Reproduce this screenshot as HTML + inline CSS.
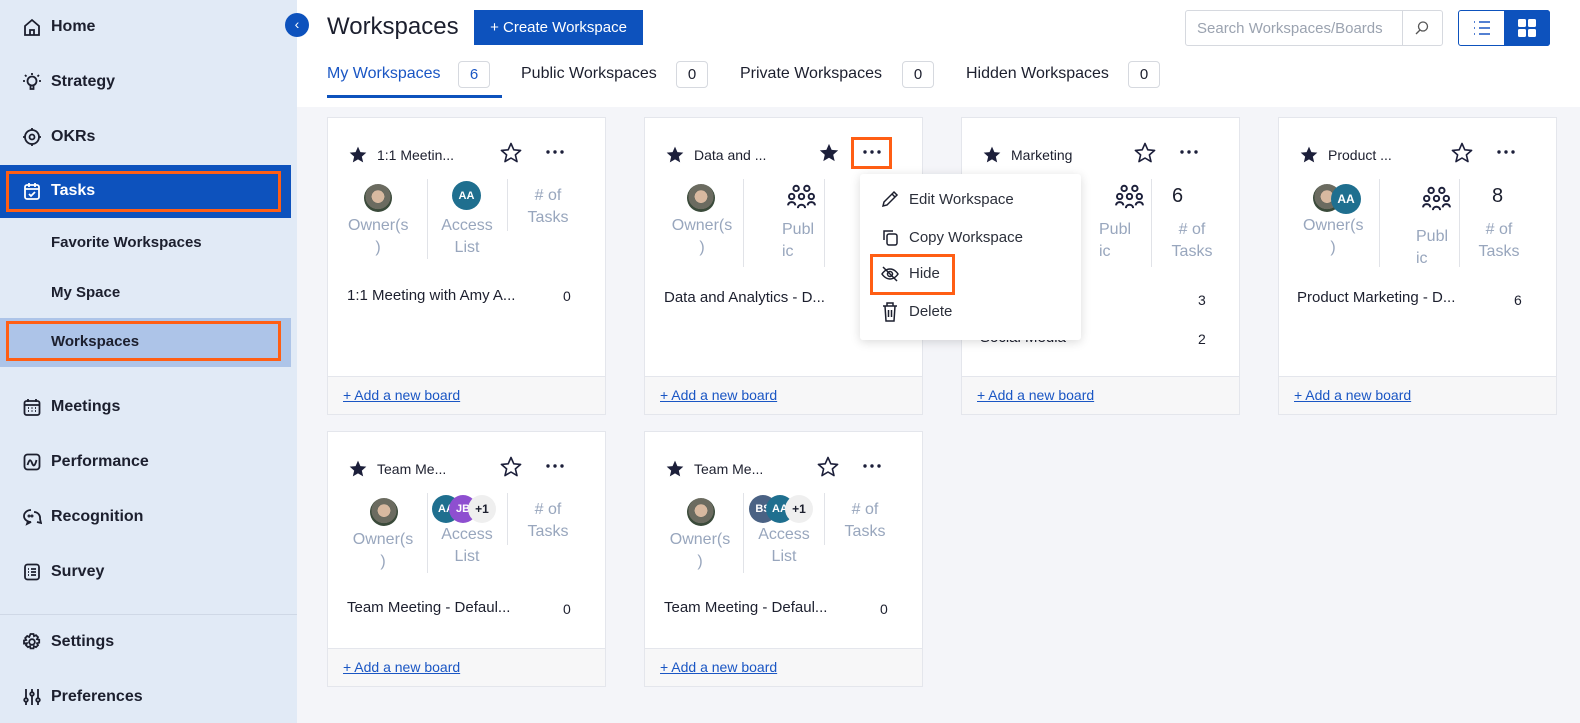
<!DOCTYPE html>
<html><head><meta charset="utf-8"><style>
*{box-sizing:border-box;margin:0;padding:0}
body{width:1580px;height:723px;overflow:hidden;font-family:"Liberation Sans",sans-serif;background:#f4f5f9;position:relative;color:#1c1f2e}
.a{position:absolute}
#side{left:0;top:0;width:297px;height:723px;background:#e1eaf6}
.ni{position:absolute;left:22px;font-size:16px;font-weight:bold;color:#1c1f2e;display:flex;align-items:center;gap:9px}
.ni svg{width:20px;height:20px;fill:none;stroke:#1c1f2e;stroke-width:1.8}
.sub{position:absolute;left:51px;font-size:15px;font-weight:bold;color:#1c1f2e}
.card{position:absolute;width:279px;background:#fff;border:1px solid #e4e6ec}
.foot{position:absolute;left:0;right:0;bottom:0;height:38px;background:#f7f7f8;border-top:1px solid #e4e6ec}
.foot span{position:absolute;left:15px;top:10px;font-size:14px;color:#1a56c4;text-decoration:underline}
.t{font-size:14px;color:#1c1f2e}
.g{color:#98a6bd;font-size:16px;line-height:22px;text-align:center}
.dv{position:absolute;width:1px;background:#e1e3e8}
.av{position:absolute;width:28px;height:28px;border-radius:50%;color:#fff;font-size:11px;font-weight:bold;display:flex;align-items:center;justify-content:center}
.ph{background:radial-gradient(circle at 50% 45%,#d8b9a0 0 30%,#6b6b60 31% 60%,#3a4a3a 61%)}
.tab{position:absolute;top:65px;font-size:16px;color:#1c1f2e}
.bd{position:absolute;top:61px;width:32px;height:27px;border:1px solid #d6d9df;border-radius:4px;font-size:15px;text-align:center;line-height:25px;background:#fff}
.dots{position:absolute;width:18px;height:4px}
</style></head><body>
<div id="side" class="a">
<div class="ni" style="top:17px"><svg viewBox="0 0 20 20"><path d="M3 9l7-6 7 6v9H3z M8 18v-5h4v5"/></svg>Home</div>
<div class="ni" style="top:72px"><svg viewBox="0 0 20 20"><circle cx="10" cy="9" r="4.5"/><path d="M8.5 14v3h3v-3M10 1v2M3 3l1.5 1.5M17 3l-1.5 1.5M1 9h2M17 9h2"/></svg>Strategy</div>
<div class="ni" style="top:127px"><svg viewBox="0 0 20 20"><circle cx="10" cy="10" r="7"/><circle cx="10" cy="10" r="2.5"/><path d="M10 1v2M10 17v2M1 10h2M17 10h2"/></svg>OKRs</div>
<div class="a" style="left:0;top:165px;width:291px;height:53px;background:#0d52bd"></div>
<div class="a" style="left:6px;top:171px;width:275px;height:41px;border:3px solid #ff5e14"></div>
<div class="ni" style="top:181px;color:#fff"><svg viewBox="0 0 20 20" style="stroke:#fff"><rect x="3" y="4" width="14" height="14" rx="2"/><path d="M3 8h14M7 2v4M13 2v4M7 13l2 2 4-4"/></svg>Tasks</div>
<div class="sub" style="top:234px">Favorite Workspaces</div>
<div class="sub" style="top:284px">My Space</div>
<div class="a" style="left:0;top:318px;width:291px;height:49px;background:#adc4e8"></div>
<div class="a" style="left:6px;top:321px;width:275px;height:40px;border:3px solid #ff5e14"></div>
<div class="sub" style="top:333px">Workspaces</div>
<div class="ni" style="top:397px"><svg viewBox="0 0 20 20"><rect x="2.5" y="4" width="15" height="14" rx="2"/><path d="M2.5 8h15M6 2v3M14 2v3M6 11h1M9.5 11h1M13 11h1M6 14h1M9.5 14h1M13 14h1"/></svg>Meetings</div>
<div class="ni" style="top:452px"><svg viewBox="0 0 20 20"><rect x="2.5" y="2.5" width="15" height="15" rx="3"/><path d="M5.5 13c2-6 3-6 4.5-2s3 3 4.5-3"/></svg>Performance</div>
<div class="ni" style="top:507px"><svg viewBox="0 0 20 20"><path d="M9 3a7 6 0 1 0 0 12l-4 2 1-3M12 5a6 6 0 0 1 6 7l1 4-4-1"/><circle cx="7" cy="9" r=".6"/><circle cx="10" cy="9" r=".6"/></svg>Recognition</div>
<div class="ni" style="top:562px"><svg viewBox="0 0 20 20"><rect x="3" y="2.5" width="14" height="15" rx="2.5"/><path d="M6 7h1M9 7h5M6 10h1M9 10h5M6 13h1M9 13h5"/></svg>Survey</div>
<div class="a" style="left:0;top:614px;width:297px;height:1px;background:#cfd8e6"></div>
<div class="ni" style="top:632px"><svg viewBox="0 0 20 20"><circle cx="10" cy="10" r="2.8"/><path d="M8.5 2h3l.5 2.2 2-1 2 2-1 2 2.2.5v3l-2.2.5 1 2-2 2-2-1-.5 2.2h-3l-.5-2.2-2 1-2-2 1-2L2 11.5v-3l2.2-.5-1-2 2-2 2 1z"/></svg>Settings</div>
<div class="ni" style="top:687px"><svg viewBox="0 0 20 20"><path d="M4 2v9M4 15v3M10 2v3M10 9v9M16 2v9M16 15v3"/><circle cx="4" cy="13" r="1.8"/><circle cx="10" cy="7" r="1.8"/><circle cx="16" cy="13" r="1.8"/></svg>Preferences</div>
</div>
<div class="a" style="left:297px;top:0;width:1283px;height:107px;background:#fff"></div>
<div class="a" style="left:285px;top:13px;width:24px;height:24px;border-radius:50%;background:#0d52bd;color:#fff;font-size:14px;text-align:center;line-height:23px">&#8249;</div>
<div class="a" style="left:327px;top:13px;font-size:24px;color:#1c1f2e">Workspaces</div>
<div class="a" style="left:474px;top:10px;width:169px;height:35px;background:#0d52bd;color:#fff;font-size:15px;line-height:35px;text-align:center">+ Create Workspace</div>
<div class="tab" style="left:327px;color:#1a56c4">My Workspaces</div><div class="bd" style="left:458px;color:#1a56c4">6</div>
<div class="a" style="left:327px;top:95px;width:175px;height:3px;background:#0d52bd"></div>
<div class="tab" style="left:521px">Public Workspaces</div><div class="bd" style="left:676px">0</div>
<div class="tab" style="left:740px">Private Workspaces</div><div class="bd" style="left:902px">0</div>
<div class="tab" style="left:966px">Hidden Workspaces</div><div class="bd" style="left:1128px">0</div>
<div class="a" style="left:1185px;top:10px;width:258px;height:36px;border:1px solid #d6d9df;border-radius:3px;background:#fff"><span class="a" style="left:11px;top:9px;font-size:15px;color:#9ba3b0;white-space:nowrap;width:195px;overflow:hidden">Search Workspaces/Boards</span><div class="a" style="left:216px;top:0;width:1px;height:34px;background:#d6d9df"></div><svg class="a" style="left:228px;top:9px" width="16" height="16" viewBox="0 0 16 16" fill="none" stroke="#555" stroke-width="1.3"><circle cx="9" cy="6.5" r="4.5"/><path d="M6 10l-4 4"/></svg></div>
<div class="a" style="left:1458px;top:10px;width:92px;height:36px;border:1px solid #0d52bd;border-radius:3px;background:#fff"></div>
<svg class="a" style="left:1471px;top:17px" width="22" height="22" viewBox="0 0 22 22" fill="none" stroke="#1a56c4" stroke-width="1.6"><path d="M8 5h11M8 11h11M8 17h11M3 5h1M3 11h1M3 17h1"/></svg>
<div class="a" style="left:1504px;top:10px;width:46px;height:36px;background:#0d52bd;border-radius:0 3px 3px 0"></div>
<svg class="a" style="left:1517px;top:18px" width="20" height="20" viewBox="0 0 20 20" fill="#fff"><rect x="1" y="1" width="8" height="8" rx="1.5"/><rect x="11" y="1" width="8" height="8" rx="1.5"/><rect x="1" y="11" width="8" height="8" rx="1.5"/><rect x="11" y="11" width="8" height="8" rx="1.5"/></svg>

<svg width="0" height="0" style="position:absolute"><defs>
<symbol id="sf" viewBox="0 0 24 24"><path d="M12 2l2.9 6.6 7.1.6-5.4 4.7 1.6 7-6.2-3.7-6.2 3.7 1.6-7L2 9.2l7.1-.6z" fill="#1c1f3a"/></symbol>
<symbol id="so" viewBox="0 0 24 24"><path d="M12 2.5l2.8 6.3 6.8.6-5.2 4.5 1.6 6.7-6-3.6-6 3.6 1.6-6.7-5.2-4.5 6.8-.6z" fill="none" stroke="#1c1f3a" stroke-width="1.6" stroke-linejoin="round"/></symbol>
<symbol id="pp" viewBox="0 0 32 28"><g fill="none" stroke="#1c1f3a" stroke-width="2.2"><circle cx="10" cy="5" r="3"/><circle cx="22" cy="5" r="3"/><circle cx="5" cy="14" r="3"/><circle cx="16" cy="14" r="3"/><circle cx="27" cy="14" r="3"/><path d="M1 24c0-5 8-5 8 0M12 27c0-5 8-5 8 0M23 24c0-5 8-5 8 0"/></g></symbol>
<symbol id="dd" viewBox="0 0 18 4"><circle cx="2" cy="2" r="1.7" fill="#1c1f3a"/><circle cx="9" cy="2" r="1.7" fill="#1c1f3a"/><circle cx="16" cy="2" r="1.7" fill="#1c1f3a"/></symbol>
</defs></svg>

<div class="card" style="left:327px;top:117px;height:298px">
<svg class="a" style="left:20px;top:27px" width="20" height="20"><use href="#sf"/></svg>
<div class="a t" style="left:49px;top:29px">1:1 Meetin...</div>
<svg class="a" style="left:171px;top:23px" width="24" height="24"><use href="#so"/></svg>
<svg class="dots" style="left:218px;top:32px"><use href="#dd"/></svg>
<div class="dv" style="left:99px;top:61px;height:80px"></div><div class="dv" style="left:179px;top:61px;height:52px"></div>
<div class="av ph" style="left:36px;top:66px"></div>
<div class="a g" style="left:20px;top:97px;width:60px">Owner(s<br>)</div>
<div class="av" style="left:124px;top:63px;background:#1f6f8f;width:29px;height:29px">AA</div>
<div class="a g" style="left:104px;top:97px;width:70px">Access<br>List</div>
<div class="a g" style="left:185px;top:67px;width:70px">#&nbsp;of<br>Tasks</div>
<div class="a t" style="left:19px;top:169px;font-size:15px">1:1 Meeting with Amy A...</div><div class="a t" style="left:235px;top:170px">0</div>
<div class="foot"><span>+ Add a new board</span></div></div>

<div class="card" style="left:644px;top:117px;height:298px">
<svg class="a" style="left:20px;top:27px" width="20" height="20"><use href="#sf"/></svg>
<div class="a t" style="left:49px;top:29px">Data and ...</div>
<svg class="a" style="left:173px;top:24px" width="22" height="22"><use href="#sf"/></svg>
<svg class="dots" style="left:218px;top:32px"><use href="#dd"/></svg>
<div class="a" style="left:206px;top:19px;width:41px;height:32px;border:3px solid #ff5e14"></div>
<div class="dv" style="left:98px;top:61px;height:88px"></div><div class="dv" style="left:179px;top:61px;height:88px"></div>
<div class="av ph" style="left:42px;top:66px"></div>
<div class="a g" style="left:22px;top:97px;width:70px">Owner(s<br>)</div>
<svg class="a" style="left:142px;top:66px" width="29" height="25"><use href="#pp"/></svg>
<div class="a g" style="left:137px;top:101px;text-align:left;width:40px">Publ<br>ic</div>
<div class="a t" style="left:19px;top:171px;font-size:15px">Data and Analytics - D...</div>
<div class="foot"><span>+ Add a new board</span></div></div>

<div class="card" style="left:961px;top:117px;height:298px">
<svg class="a" style="left:20px;top:27px" width="20" height="20"><use href="#sf"/></svg>
<div class="a t" style="left:49px;top:29px">Marketing</div>
<svg class="a" style="left:171px;top:23px" width="24" height="24"><use href="#so"/></svg>
<svg class="dots" style="left:218px;top:32px"><use href="#dd"/></svg>
<div class="dv" style="left:189px;top:61px;height:88px"></div>
<svg class="a" style="left:153px;top:66px" width="29" height="25"><use href="#pp"/></svg>
<div class="a g" style="left:137px;top:101px;text-align:left;width:40px">Publ<br>ic</div>
<div class="a" style="left:210px;top:67px;font-size:20px">6</div>
<div class="a g" style="left:195px;top:101px;width:70px">#&nbsp;of<br>Tasks</div>
<div class="a t" style="left:18px;top:211px;font-size:15px">Social Media</div>
<div class="a t" style="left:236px;top:174px">3</div><div class="a t" style="left:236px;top:213px">2</div>
<div class="foot"><span>+ Add a new board</span></div></div>

<div class="card" style="left:1278px;top:117px;height:298px">
<svg class="a" style="left:20px;top:27px" width="20" height="20"><use href="#sf"/></svg>
<div class="a t" style="left:49px;top:29px">Product ...</div>
<svg class="a" style="left:171px;top:23px" width="24" height="24"><use href="#so"/></svg>
<svg class="dots" style="left:218px;top:32px"><use href="#dd"/></svg>
<div class="dv" style="left:100px;top:61px;height:88px"></div><div class="dv" style="left:180px;top:61px;height:88px"></div>
<div class="av ph" style="left:34px;top:66px"></div>
<div class="av" style="left:52px;top:66px;background:#1f6f8f;width:30px;height:30px;font-size:12px">AA</div>
<div class="a g" style="left:24px;top:97px;width:60px">Owner(s<br>)</div>
<svg class="a" style="left:143px;top:68px" width="29" height="25"><use href="#pp"/></svg>
<div class="a g" style="left:137px;top:108px;text-align:left;width:40px">Publ<br>ic</div>
<div class="a" style="left:213px;top:67px;font-size:20px">8</div>
<div class="a g" style="left:185px;top:101px;width:70px">#&nbsp;of<br>Tasks</div>
<div class="a t" style="left:18px;top:171px;font-size:15px">Product Marketing - D...</div><div class="a t" style="left:235px;top:174px">6</div>
<div class="foot"><span>+ Add a new board</span></div></div>

<div class="card" style="left:327px;top:431px;height:256px">
<svg class="a" style="left:20px;top:27px" width="20" height="20"><use href="#sf"/></svg>
<div class="a t" style="left:49px;top:29px">Team Me...</div>
<svg class="a" style="left:171px;top:23px" width="24" height="24"><use href="#so"/></svg>
<svg class="dots" style="left:218px;top:32px"><use href="#dd"/></svg>
<div class="dv" style="left:99px;top:61px;height:80px"></div><div class="dv" style="left:179px;top:61px;height:52px"></div>
<div class="av ph" style="left:42px;top:66px"></div>
<div class="a g" style="left:20px;top:97px;width:70px">Owner(s<br>)</div>
<div class="av" style="left:104px;top:63px;background:#1f6f8f">AA</div>
<div class="av" style="left:121px;top:63px;background:#8e4fd0">JB</div>
<div class="av" style="left:140px;top:63px;background:#efefef;color:#1c1f2e;font-size:12px">+1</div>
<div class="a g" style="left:104px;top:92px;width:70px">Access<br>List</div>
<div class="a g" style="left:185px;top:67px;width:70px">#&nbsp;of<br>Tasks</div>
<div class="a t" style="left:19px;top:167px;font-size:15px">Team Meeting - Defaul...</div><div class="a t" style="left:235px;top:169px">0</div>
<div class="foot"><span>+ Add a new board</span></div></div>

<div class="card" style="left:644px;top:431px;height:256px">
<svg class="a" style="left:20px;top:27px" width="20" height="20"><use href="#sf"/></svg>
<div class="a t" style="left:49px;top:29px">Team Me...</div>
<svg class="a" style="left:171px;top:23px" width="24" height="24"><use href="#so"/></svg>
<svg class="dots" style="left:218px;top:32px"><use href="#dd"/></svg>
<div class="dv" style="left:98px;top:61px;height:80px"></div><div class="dv" style="left:179px;top:61px;height:52px"></div>
<div class="av ph" style="left:42px;top:66px"></div>
<div class="a g" style="left:20px;top:97px;width:70px">Owner(s<br>)</div>
<div class="av" style="left:104px;top:63px;background:#4a6284">BS</div>
<div class="av" style="left:121px;top:63px;background:#1f6f8f">AA</div>
<div class="av" style="left:140px;top:63px;background:#efefef;color:#1c1f2e;font-size:12px">+1</div>
<div class="a g" style="left:104px;top:92px;width:70px">Access<br>List</div>
<div class="a g" style="left:185px;top:67px;width:70px">#&nbsp;of<br>Tasks</div>
<div class="a t" style="left:19px;top:167px;font-size:15px">Team Meeting - Defaul...</div><div class="a t" style="left:235px;top:169px">0</div>
<div class="foot"><span>+ Add a new board</span></div></div>

<div class="a" style="left:860px;top:174px;width:221px;height:166px;background:#fff;border-radius:3px;box-shadow:0 2px 10px rgba(0,0,0,.15)">
<svg class="a" style="left:20px;top:15px" width="20" height="20" viewBox="0 0 20 20" fill="none" stroke="#1c1f2e" stroke-width="1.5"><path d="M3 17l1-4L14 3l3 3L7 16z M12 5l3 3"/></svg>
<div class="a t" style="left:49px;top:17px;font-size:15px;color:#2b2f3a">Edit Workspace</div>
<svg class="a" style="left:20px;top:53px" width="20" height="20" viewBox="0 0 20 20" fill="none" stroke="#1c1f2e" stroke-width="1.5"><path d="M4 13V4h9"/><rect x="7" y="7" width="10" height="11" rx="2"/></svg>
<div class="a t" style="left:49px;top:55px;font-size:15px;color:#2b2f3a">Copy Workspace</div>
<svg class="a" style="left:20px;top:90px" width="20" height="20" viewBox="0 0 20 20" fill="none" stroke="#1c1f2e" stroke-width="1.5"><path d="M2 10s3-5 8-5 8 5 8 5-3 5-8 5-8-5-8-5z"/><circle cx="10" cy="10" r="2.5"/><path d="M3 3l14 14"/></svg>
<div class="a t" style="left:49px;top:91px;font-size:15px;color:#2b2f3a">Hide</div>
<div class="a" style="left:10px;top:80px;width:85px;height:41px;border:3px solid #ff5e14"></div>
<svg class="a" style="left:20px;top:127px" width="20" height="22" viewBox="0 0 20 22" fill="none" stroke="#1c1f2e" stroke-width="1.5"><path d="M3 5h14M7 5V2h6v3M5 5l1 15h8l1-15M8.5 9v7M11.5 9v7"/></svg>
<div class="a t" style="left:49px;top:129px;font-size:15px;color:#2b2f3a">Delete</div>
</div>
</body></html>
